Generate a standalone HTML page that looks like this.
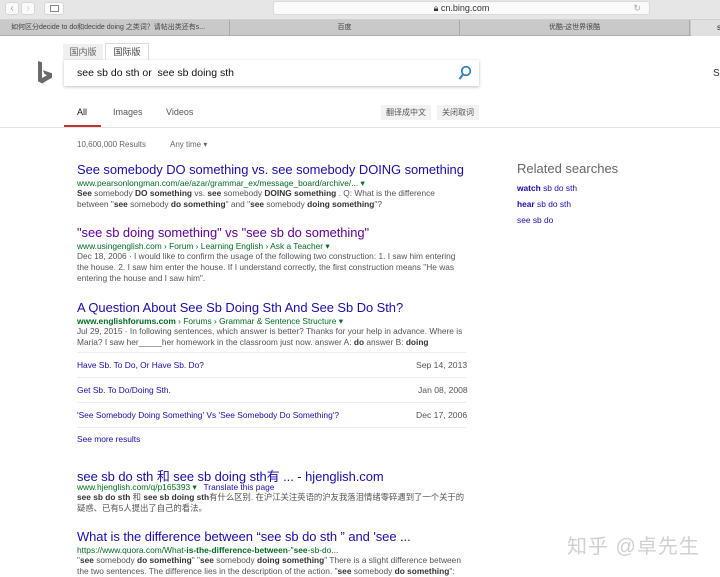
<!DOCTYPE html>
<html><head><meta charset="utf-8"><style>
*{margin:0;padding:0;box-sizing:border-box}
body{width:720px;height:572px;overflow:hidden;background:#fff;font-family:"Liberation Sans","Noto Sans CJK SC",sans-serif;position:relative}
.a{position:absolute;white-space:nowrap}
.t{color:#1a0dab;font-size:12.95px;letter-spacing:-0.05px}
.u{color:#006d21;font-size:8.4px}
.s{color:#545454;font-size:8.35px;line-height:11px}
.s b{color:#333}
.d{color:#555;font-size:8.6px}
.l{color:#1a0dab;font-size:8.4px}
.hr{position:absolute;left:77px;width:389px;height:1px;background:#ececec}
</style></head><body>
<div class="a" style="left:0;top:0;width:720px;height:20px;background:#e6e6e6;border-bottom:1px solid #cfcfcf"></div>
<div class="a" style="left:5px;top:2px;width:14px;height:13px;background:#fafafa;border:1px solid #d6d6d6;border-radius:3px;font-size:10px;color:#999;text-align:center;line-height:11px">‹</div>
<div class="a" style="left:21px;top:2px;width:14px;height:13px;background:#fafafa;border:1px solid #d6d6d6;border-radius:3px;font-size:10px;color:#ccc;text-align:center;line-height:11px">›</div>
<div class="a" style="left:44px;top:2px;width:20px;height:13px;background:#fafafa;border:1px solid #d6d6d6;border-radius:3px"><div class="a" style="left:5px;top:2px;width:9px;height:7px;border:1px solid #888"></div></div>
<div class="a" style="left:273px;top:1px;width:377px;height:14px;background:#fafafa;border:1px solid #dadada;border-radius:3px;font-size:9px;color:#333;text-align:center;line-height:13px">🔒︎ cn.bing.com<span style="position:absolute;right:8px;color:#aaa">↻</span></div>
<div class="a" style="left:0;top:20px;width:720px;height:16px;background:#c9c9c9;border-bottom:1px solid #b0b0b0"></div>
<div class="a" style="left:0;top:20px;width:230px;height:16px;font-size:7px;color:#444;line-height:16px;padding-left:11px;border-right:1px solid #aaa">如何区分decide to do和decide doing 之类词？请帖出类还有s...</div>
<div class="a" style="left:230px;top:20px;width:230px;height:16px;font-size:7px;color:#444;line-height:16px;text-align:center;border-right:1px solid #aaa">百度</div>
<div class="a" style="left:460px;top:20px;width:230px;height:16px;font-size:7px;color:#444;line-height:16px;text-align:center;border-right:1px solid #aaa">优酷-这世界很酷</div>
<div class="a" style="left:691px;top:20px;width:29px;height:16px;background:#e0e0e0;font-size:8px;color:#222;line-height:16px;padding-left:26px">s</div>
<svg class="a" style="left:37px;top:61px" width="16" height="24" viewBox="0 0 16 24"><path d="M1 0L5 1.4V17L10 14.3 7.5 13 6 9.3 15 12.3V16.6L5 22.5 1 20.2Z" fill="#6a6a6a"/></svg>
<div class="a" style="left:63px;top:44px;width:40px;height:16px;background:#f0f0f0;font-size:9px;color:#666;line-height:16px;text-align:center">国内版</div>
<div class="a" style="left:105px;top:43px;width:44px;height:18px;background:#fff;border:1px solid #ddd;border-bottom:none;font-size:9px;color:#444;line-height:17px;text-align:center">国际版</div>
<div class="a" style="left:64px;top:60px;width:415px;height:26px;background:#fff;box-shadow:0 1px 3px rgba(0,0,0,.25);font-size:10.5px;color:#111;line-height:26px;padding-left:13px">see sb do sth or&nbsp; see sb doing sth</div>
<svg class="a" style="left:458px;top:65px" width="14" height="16" viewBox="0 0 14 16"><circle cx="8" cy="6" r="4.3" fill="none" stroke="#2b7bb9" stroke-width="1.7"/><path d="M5.2 9.2L1.5 14" stroke="#2b7bb9" stroke-width="2"/></svg>
<div class="a" style="left:713px;top:68px;font-size:10px;color:#333">S</div>
<div class="a" style="left:77px;top:107px;font-size:9px;color:#111">All</div>
<div class="a" style="left:113px;top:107px;font-size:9px;color:#555">Images</div>
<div class="a" style="left:166px;top:107px;font-size:9px;color:#555">Videos</div>
<div class="a" style="left:64px;top:125px;width:37px;height:2px;background:#c4342d"></div>
<div class="a" style="left:0;top:127px;width:720px;height:1px;background:#e4e4e4"></div>
<div class="a" style="left:381px;top:105px;width:50px;height:15px;background:#f2f2f2;font-size:8px;color:#555;line-height:15px;text-align:center">翻译成中文</div>
<div class="a" style="left:437px;top:105px;width:42px;height:15px;background:#f2f2f2;font-size:8px;color:#555;line-height:15px;text-align:center">关闭取词</div>
<div class="a" style="left:77px;top:140px;font-size:8px;color:#666">10,600,000 Results</div>
<div class="a" style="left:170px;top:140px;font-size:8px;color:#666">Any time ▾</div>

<div class="a t" style="left:77px;top:162px">See somebody DO something vs. see somebody DOING something</div>
<div class="a u" style="left:77px;top:178px">www.pearsonlongman.com/ae/azar/grammar_ex/message_board/archive/... ▾</div>
<div class="a s" style="left:77px;top:188px"><b>See</b> somebody <b>DO something</b> vs. <b>see</b> somebody <b>DOING something</b> . Q: What is the difference<br>between "<b>see</b> somebody <b>do something</b>" and "<b>see</b> somebody <b>doing something</b>"?</div>

<div class="a t" style="left:77px;top:225px;color:#660099">"see sb doing something" vs "see sb do something"</div>
<div class="a u" style="left:77px;top:241px">www.usingenglish.com › Forum › Learning English › Ask a Teacher ▾</div>
<div class="a s" style="left:77px;top:251px">Dec 18, 2006 · I would like to confirm the usage of the following two construction: 1. I saw him entering<br>the house. 2. I saw him enter the house. If I understand correctly, the first construction means "He was<br>entering the house and I saw him".</div>

<div class="a t" style="left:77px;top:300px">A Question About See Sb Doing Sth And See Sb Do Sth?</div>
<div class="a u" style="left:77px;top:316px"><b>www.englishforums.com</b> › Forums › Grammar &amp; Sentence Structure ▾</div>
<div class="a s" style="left:77px;top:326px">Jul 29, 2015 · In following sentences, which answer is better? Thanks for your help in advance. Where is<br>Maria? I saw her_____her homework in the classroom just now. answer A: <b>do</b> answer B: <b>doing</b></div>
<div class="hr" style="top:352px"></div>
<div class="a l" style="left:77px;top:360px">Have Sb. To Do, Or Have Sb. Do?</div><div class="a d" style="left:416px;top:360px">Sep 14, 2013</div>
<div class="hr" style="top:377px"></div>
<div class="a l" style="left:77px;top:385px">Get Sb. To Do/Doing Sth.</div><div class="a d" style="left:418px;top:385px">Jan 08, 2008</div>
<div class="hr" style="top:402px"></div>
<div class="a l" style="left:77px;top:410px">'See Somebody Doing Something' Vs 'See Somebody Do Something'?</div><div class="a d" style="left:416px;top:410px">Dec 17, 2006</div>
<div class="hr" style="top:427px"></div>
<div class="a l" style="left:77px;top:434px">See more results</div>

<div class="a t" style="left:77px;top:466px">see sb do sth 和 see sb doing sth有 ... - hjenglish.com</div>
<div class="a u" style="left:77px;top:482px">www.hjenglish.com/q/p165393 ▾ &nbsp; <span style="color:#1a0dab">Translate this page</span></div>
<div class="a s" style="left:77px;top:492px"><b>see sb do sth</b> 和 <b>see sb doing sth</b>有什么区别. 在沪江关注英语的沪友我落泪情绪零碎遇到了一个关于的<br>疑惑、已有5人提出了自己的看法。</div>

<div class="a t" style="left:77px;top:529px">What is the difference between “see sb do sth ” and 'see ...</div>
<div class="a u" style="left:77px;top:545px">https://www.quora.com/What-<b>is-the-difference-between</b>-"<b>see</b>-sb-do...</div>
<div class="a s" style="left:77px;top:555px">"<b>see</b> somebody <b>do something</b>" "<b>see</b> somebody <b>doing something</b>" There is a slight difference between<br>the two sentences. The difference lies in the description of the action. "<b>see</b> somebody <b>do something</b>":</div>

<div class="a" style="left:517px;top:161px;font-size:13px;color:#666">Related searches</div>
<div class="a l" style="left:517px;top:183px"><b>watch</b> sb do sth</div>
<div class="a l" style="left:517px;top:199px"><b>hear</b> sb do sth</div>
<div class="a l" style="left:517px;top:215px">see sb do</div>

<div class="a" style="left:567px;top:530px;font-size:20px;color:rgba(200,200,200,.85);letter-spacing:1px">知乎 @卓先生</div>
</body></html>
